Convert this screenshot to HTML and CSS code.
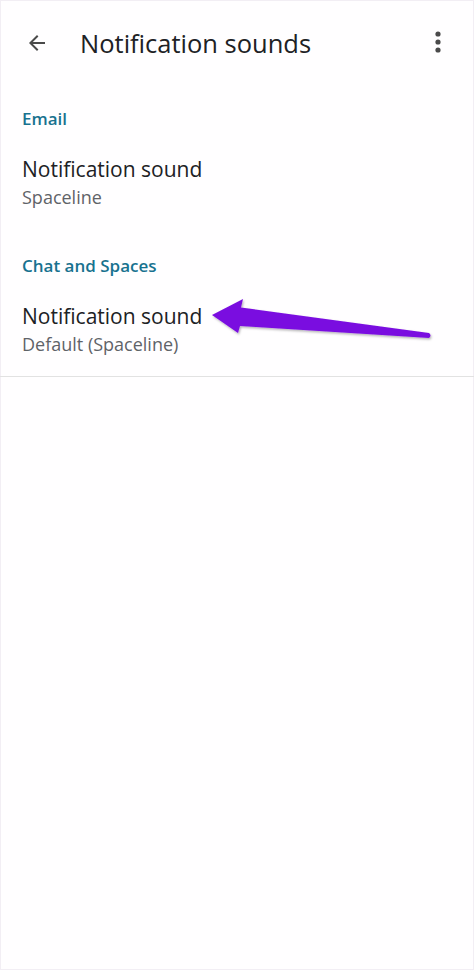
FILE: index.html
```html
<!DOCTYPE html>
<html lang="en">
<head>
<meta charset="utf-8">
<title>Notification sounds</title>
<link rel="stylesheet" href="styles.css">
</head>
<body>
<div class="screen">
  <header class="appbar">
    <button class="icon-btn back" aria-label="Back">
      <svg width="24" height="24" viewBox="0 0 24 24"><path d="M20 11H7.83l5.59-5.59L12 4l-8 8 8 8 1.41-1.41L7.83 13H20v-2z" fill="#4a4a4a"/></svg>
    </button>
    <h1 class="title">Notification sounds</h1>
    <button class="icon-btn more" aria-label="More options">
      <svg width="10" height="28" viewBox="0 0 10 28"><circle cx="5" cy="5" r="2.6" fill="#4a4a4a"/><circle cx="5" cy="13" r="2.6" fill="#4a4a4a"/><circle cx="5" cy="21" r="2.6" fill="#4a4a4a"/></svg>
    </button>
  </header>

  <main class="list">
    <section class="section">
      <h2 class="section-title">Email</h2>
      <div class="item">
        <div class="item-title">Notification sound</div>
        <div class="item-sub">Spaceline</div>
      </div>
    </section>
    <section class="section">
      <h2 class="section-title">Chat and Spaces</h2>
      <div class="item">
        <div class="item-title">Notification sound</div>
        <div class="item-sub">Default (Spaceline)</div>
      </div>
    </section>
  </main>

  <svg class="annotation" width="474" height="970" viewBox="0 0 474 970">
    <defs>
      <filter id="sh" x="-10%" y="-50%" width="120%" height="200%">
        <feDropShadow dx="1" dy="1.5" stdDeviation="1.2" flood-color="#000" flood-opacity="0.3"/>
      </filter>
    </defs>
    <path d="M212 315 L243 299 L241 307.5 L429 333 Q432 335.5 429 338 L240 326 L238 333 Z" fill="#7a0fe0" filter="url(#sh)"/>
  </svg>
</div>
</body>
</html>
```

FILE: styles.css
```css
* { box-sizing: border-box; }
html, body {
  margin: 0;
  padding: 0;
  background: #ffffff;
}
body {
  font-family: "Open Sans", Roboto, Arial, sans-serif;
  color: #202124;
}
.screen {
  position: relative;
  width: 474px;
  height: 970px;
  background: #fffeff;
  box-shadow: inset 0 0 0 1px #f2eef4;
  overflow: hidden;
}
.appbar {
  display: flex;
  align-items: center;
  height: 86px;
  padding: 0 20px 0 25px;
}
.icon-btn {
  background: none;
  border: 0;
  padding: 0;
  margin: 0;
  display: flex;
  align-items: center;
  justify-content: center;
}
.back {
  width: 24px;
  height: 24px;
}
.title {
  flex: 1;
  margin: 0 0 0 31px;
  font-size: 25.5px;
  font-weight: 400;
  color: #202124;
  line-height: 30px;
}
.more {
  width: 10px;
  height: 28px;
  margin-right: 11px;
}
.list {
  border-bottom: 1px solid #e2e2e2;
  padding-bottom: 18px;
}
.section {
  padding: 21px 22px 0 22px;
}
.section + .section {
  padding-top: 43px;
}
.section-title {
  margin: 0;
  font-size: 17px;
  font-weight: 600;
  line-height: 24px;
  color: #18728f;
}
.item {
  padding-top: 24px;
}
.item-title {
  font-size: 21px;
  line-height: 28px;
  color: #202124;
}
.item-sub {
  font-size: 18px;
  line-height: 28px;
  color: #5f6368;
}
.annotation {
  position: absolute;
  left: 0;
  top: 0;
  pointer-events: none;
}
```
